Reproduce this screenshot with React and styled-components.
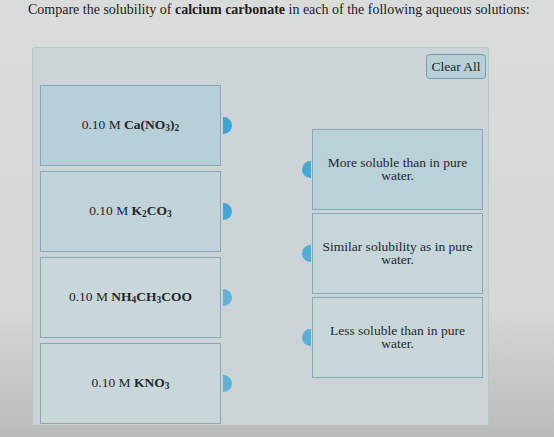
import React from 'react';
import styled, { createGlobalStyle } from 'styled-components';

const GlobalStyle = createGlobalStyle`
    html, body {
        margin: 0;
        padding: 0;
    }

    body {
        width: 554px;
        height: 437px;
        overflow: hidden;
        background: linear-gradient(180deg, #dadcdb 0%, #d5d8d7 70%, #b9bcbb 100%);
        font-family: "Liberation Serif", "Times New Roman", serif;
        color: #2a2d2f;
    }
`;

const Page = styled.div`
    padding: 2px 0 0 28px;
`;

const Prompt = styled.p`
    margin: 0;
    font-size: 14px;
    line-height: 16px;
    color: #1a1c1e;

    b {
        font-weight: bold;
    }
`;

const Panel = styled.div`
    margin: 29px 0 0 4px;
    width: 457px;
    height: 378px;
    box-sizing: border-box;
    background: #ccd4d7;
    border: 1px solid #b8c5c9;
    border-bottom: none;
    border-radius: 3px 3px 0 0;
    padding: 6px 2px 0 0;
`;

const Toolbar = styled.div`
    display: flex;
    justify-content: flex-end;
`;

const ClearButton = styled.button`
    width: 60px;
    height: 25px;
    padding: 0;
    background: #b7d0d8;
    border: 1px solid #6f9fb2;
    border-radius: 4px;
    font-family: "Liberation Serif", "Times New Roman", serif;
    font-size: 13.5px;
    color: #18252b;
    cursor: pointer;
`;

const Board = styled.div`
    display: flex;
    margin-top: 6px;
`;

const Column = styled.div`
    display: flex;
    flex-direction: column;
    gap: ${(p) => p.$gap}px;
    margin-left: ${(p) => p.$left}px;
    padding-top: ${(p) => p.$top}px;
`;

const Slot = styled.div`
    display: flex;
    align-items: center;
    gap: ${(p) => p.$gap}px;
`;

const Card = styled.div`
    width: ${(p) => p.$width}px;
    height: 81px;
    box-sizing: border-box;
    display: flex;
    align-items: center;
    justify-content: center;
    text-align: center;
    padding: 0 ${(p) => p.$pad}px 2px;
    background: ${(p) => p.$tint};
    border: 1px solid #86aab7;
    font-size: 13.5px;
    line-height: 13px;
    color: #24282b;

    b {
        font-weight: bold;
    }

    sub {
        font-size: 0.7em;
        line-height: 0;
        vertical-align: -0.25em;
    }
`;

const Tab = styled.span`
    display: block;
    width: 9px;
    height: 17px;
    background: ${(p) => p.$color};
    border-radius: ${(p) => (p.$side === 'right' ? '0 9px 9px 0' : '9px 0 0 9px')};
`;

const solutions = [
    { tint: '#b6cfd8', tab: '#3aa3d8', formula: <>Ca(NO<sub>3</sub>)<sub>2</sub></> },
    { tint: '#c1d4da', tab: '#3fa7da', formula: <>K<sub>2</sub>CO<sub>3</sub></> },
    { tint: '#c9d7da', tab: '#62b4d6', formula: <>NH<sub>4</sub>CH<sub>3</sub>COO</> },
    { tint: '#cad7da', tab: '#5db3d4', formula: <>KNO<sub>3</sub></> },
];

const answers = [
    { tint: '#b9d1d9', tab: '#46a8d6', text: 'More soluble than in pure water.' },
    { tint: '#c6d6da', tab: '#4fadd6', text: 'Similar solubility as in pure water.' },
    { tint: '#c9d7da', tab: '#5ab1d3', text: 'Less soluble than in pure water.' },
];

const App = () => {
    return (
        <>
            <GlobalStyle />
            <Page>
                <Prompt>
                    Compare the solubility of <b>calcium carbonate</b> in each of the following aqueous solutions:
                </Prompt>

                <Panel>
                    <Toolbar>
                        <ClearButton type="button">Clear All</ClearButton>
                    </Toolbar>

                    <Board>
                        <Column $gap={5} $left={7} $top={0}>
                            {solutions.map((s, i) => (
                                <Slot key={i} $gap={2}>
                                    <Card $width={181} $pad={10} $tint={s.tint}>
                                        <span>0.10 M <b>{s.formula}</b></span>
                                    </Card>
                                    <Tab $side="right" $color={s.tab} />
                                </Slot>
                            ))}
                        </Column>

                        <Column $gap={3} $left={70} $top={44}>
                            {answers.map((a, i) => (
                                <Slot key={i} $gap={1}>
                                    <Tab $side="left" $color={a.tab} />
                                    <Card $width={171} $pad={8} $tint={a.tint}>
                                        {a.text}
                                    </Card>
                                </Slot>
                            ))}
                        </Column>
                    </Board>
                </Panel>
            </Page>
        </>
    );
};

export default App;
